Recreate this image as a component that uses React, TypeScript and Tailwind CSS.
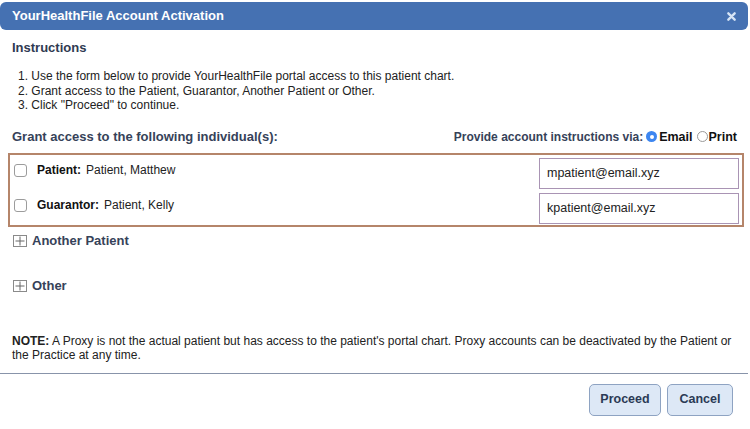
import React from "react";

const font = { fontFamily: '"Liberation Sans", Arial, Helvetica, sans-serif' };

const steps = [
  "Use the form below to provide YourHealthFile portal access to this patient chart.",
  "Grant access to the Patient, Guarantor, Another Patient or Other.",
  'Click "Proceed" to continue.',
];

const people = [
  { role: "Patient:", name: "Patient, Matthew", email: "mpatient@email.xyz" },
  { role: "Guarantor:", name: "Patient, Kelly", email: "kpatient@email.xyz" },
];

function PlusBox() {
  return (
    <span className="flex h-[12px] w-[14px] items-center justify-center border border-[#8a8a8a] bg-white">
      <svg width="10" height="10" viewBox="0 0 10 10">
        <path d="M5 0.5V9.5M0.5 5H9.5" stroke="#666" strokeWidth="1" />
      </svg>
    </span>
  );
}

export default function App() {
  return (
    <div className="h-[429px] w-[750px] overflow-hidden bg-white text-[#222]" style={font}>
      {/* title bar */}
      <div className="mt-[2px] flex h-[28px] w-[748px] items-center justify-between rounded-[6px] bg-[#4571b2] pl-[12px] pr-[12px]">
        <span className="text-[13px] font-bold text-white">YourHealthFile Account Activation</span>
        <svg width="9" height="9" viewBox="0 0 10 10">
          <path d="M1.5 1.5L8.5 8.5M8.5 1.5L1.5 8.5" stroke="#d6e4f5" strokeWidth="2.6" strokeLinecap="round" />
        </svg>
      </div>

      <div className="px-[12px]">
        <h2 className="mt-[10px] text-[13px] font-bold leading-[16px] text-[#2f3a52]">Instructions</h2>

        <ol className="mt-[13px] pl-[6px] text-[12px] leading-[14.5px]">
          {steps.map((s, i) => (
            <li key={i}>
              {i + 1}. {s}
            </li>
          ))}
        </ol>

        <div className="mt-[16px] flex items-center justify-between font-bold leading-[16px] text-[#364259]">
          <span className="text-[13px]">Grant access to the following individual(s):</span>
          <div className="mr-[1px] flex items-center text-[12px]">
            <span>Provide account instructions via:</span>
            <span className="ml-[3px] flex h-[11px] w-[11px] items-center justify-center rounded-full bg-[#3d86f0]">
              <span className="h-[4px] w-[4px] rounded-full bg-white" />
            </span>
            <span className="ml-[2px] text-[12.5px] text-[#111]">Email</span>
            <span className="ml-[4px] h-[11px] w-[11px] rounded-full border border-[#9a9a9a] bg-white" />
            <span className="ml-[1px] text-[12.5px] text-[#111]">Print</span>
          </div>
        </div>
      </div>

      {/* selected individuals */}
      <div className="ml-[8px] mt-[8px] flex w-[736px] flex-col gap-[4px] border-2 border-[#b5856a] pb-[1px] pl-[3px] pr-[3px] pt-[3px]">
        {people.map((p) => (
          <div key={p.role} className="flex items-center justify-between">
            <div className="mb-[6px] flex items-center text-[12px]">
              <span className="ml-[1px] h-[13px] w-[13px] rounded-[3px] border border-[#9c9c9c] bg-white" />
              <span className="ml-[10px] font-bold text-[#111]">{p.role}</span>
              <span className="ml-[5px]">{p.name}</span>
            </div>
            <div className="flex h-[31px] w-[200px] items-center border border-[#a994b4] bg-white pl-[7px] text-[12.5px] text-[#222]">
              {p.email}
            </div>
          </div>
        ))}
      </div>

      <div className="px-[13px]">
        <div className="mt-[7px] flex items-center gap-[5px] text-[13px] font-bold leading-[14px] text-[#364259]">
          <PlusBox />
          <span>Another Patient</span>
        </div>
        <div className="mt-[31px] flex items-center gap-[5px] text-[13px] font-bold leading-[14px] text-[#364259]">
          <PlusBox />
          <span>Other</span>
        </div>
      </div>

      <p className="mt-[41px] px-[12px] text-[12px] leading-[14px]">
        <span className="font-bold">NOTE:</span> A Proxy is not the actual patient but has access to the patient's portal chart. Proxy
        accounts can be deactivated by the Patient or the Practice at any time.
      </p>

      <div className="mt-[11px] h-px w-[748px] bg-[#8894aa]" />

      <div className="mt-[10px] flex justify-end gap-[6px] pr-[17px]">
        <button className="h-[32px] w-[72px] rounded-[5px] border border-[#8ea3c2] bg-[#dde8f6] text-[12.5px] font-bold text-[#2b3a55]">
          Proceed
        </button>
        <button className="h-[32px] w-[66px] rounded-[5px] border border-[#8ea3c2] bg-[#dde8f6] text-[12.5px] font-bold text-[#2b3a55]">
          Cancel
        </button>
      </div>
    </div>
  );
}
